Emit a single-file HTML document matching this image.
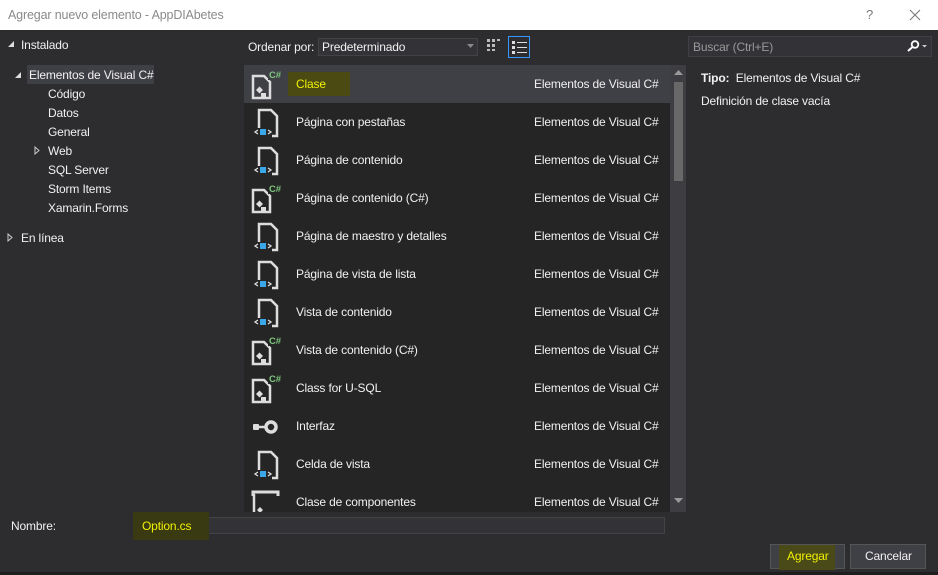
<!DOCTYPE html>
<html><head><meta charset="utf-8"><style>
*{margin:0;padding:0;box-sizing:border-box}
body{width:938px;height:575px;background:#2d2d30;font-family:"Liberation Sans",sans-serif;font-size:12px;letter-spacing:-0.15px;color:#f1f1f1;position:relative;overflow:hidden}
.a{position:absolute;white-space:nowrap}
.title{left:0;top:0;width:938px;height:30px;background:#fff}
.row{position:absolute;left:244px;width:426px;height:38px}
.row .n{position:absolute;left:52px;top:12px}
.row .c{position:absolute;left:290px;top:12px}
.row svg{position:absolute;left:6px;top:3px}
</style></head><body>
<div class="a title"></div>
<div class="a" style="left:8px;top:8px;color:#8a8a8a;font-size:12.5px">Agregar nuevo elemento - AppDIAbetes</div>
<div class="a" style="left:866px;top:7px;color:#777;font-size:13px">?</div>
<svg class="a" style="left:909px;top:9px" width="12" height="12"><path d="M1 1L11 11M11 1L1 11" stroke="#777" stroke-width="1"/></svg>

<svg class="a" style="left:7px;top:40px" width="8" height="8"><path d="M7 1V7H1Z" fill="#ddd"/></svg>
<div class="a" style="left:21px;top:38px">Instalado</div>
<div class="a" style="left:27px;top:65px;width:127px;height:19px;background:#3f3f46"></div>
<svg class="a" style="left:14px;top:71px" width="8" height="8"><path d="M7 1V7H1Z" fill="#ddd"/></svg>
<div class="a" style="left:29px;top:68px">Elementos de Visual C#</div>
<div class="a" style="left:48px;top:87px">Código</div>
<div class="a" style="left:48px;top:106px">Datos</div>
<div class="a" style="left:48px;top:125px">General</div>
<svg class="a" style="left:34px;top:146px" width="6" height="9"><path d="M1 1L5 4.5L1 8Z" fill="none" stroke="#ccc"/></svg>
<div class="a" style="left:48px;top:144px">Web</div>
<div class="a" style="left:48px;top:163px">SQL Server</div>
<div class="a" style="left:48px;top:182px">Storm Items</div>
<div class="a" style="left:48px;top:201px">Xamarin.Forms</div>
<svg class="a" style="left:7px;top:233px" width="6" height="9"><path d="M1 1L5 4.5L1 8Z" fill="none" stroke="#ccc"/></svg>
<div class="a" style="left:21px;top:231px">En línea</div>

<div class="a" style="left:248px;top:40px">Ordenar por:</div>
<div class="a" style="left:318px;top:38px;width:160px;height:18px;background:#333337;border:1px solid #434346"></div>
<div class="a" style="left:322px;top:40px">Predeterminado</div>
<svg class="a" style="left:467px;top:44px" width="7" height="4"><path d="M0 0H7L3.5 4Z" fill="#888"/></svg>
<svg class="a" style="left:487px;top:37px" width="14" height="18"><g fill="#bbb"><rect x="0" y="2" width="3" height="3"/><rect x="5" y="2" width="3" height="3"/><rect x="10" y="2" width="3" height="2"/><rect x="0" y="7" width="3" height="3"/><rect x="5" y="7" width="3" height="3"/><rect x="0" y="12" width="3" height="2"/><rect x="5" y="12" width="3" height="2"/></g></svg>
<div class="a" style="left:508px;top:36px;width:22px;height:22px;border:1px solid #3399ff"></div>
<svg class="a" style="left:512px;top:40px" width="16" height="14"><g fill="#ddd"><rect x="0" y="1" width="3" height="3"/><rect x="0" y="6" width="3" height="3"/><rect x="0" y="11" width="3" height="3"/><rect x="5" y="2" width="10" height="1"/><rect x="5" y="7" width="10" height="1"/><rect x="5" y="12" width="10" height="1"/></g></svg>

<div class="a" style="left:688px;top:36px;width:244px;height:21px;background:#333337;border:1px solid #3f3f46"></div>
<div class="a" style="left:693px;top:40px;color:#999">Buscar (Ctrl+E)</div>
<svg class="a" style="left:906px;top:40px" width="22" height="12"><circle cx="9" cy="4.5" r="3.3" fill="none" stroke="#fff" stroke-width="1.8"/><path d="M6.5 7L2 11" stroke="#fff" stroke-width="2"/><path d="M16 5H21L18.5 7.5Z" fill="#ccc"/></svg>

<div class="a" style="left:244px;top:65px;width:442px;height:447px;background:#252526"></div>
<div class="a" style="left:670px;top:65px;width:16px;height:447px;background:#3e3e42"></div>
<div class="a" style="left:674px;top:82px;width:9px;height:99px;background:#686868"></div>
<svg class="a" style="left:674px;top:70px" width="9" height="5"><path d="M0 5H9L4.5 0Z" fill="#999"/></svg>
<svg class="a" style="left:674px;top:498px" width="9" height="5"><path d="M0 0H9L4.5 5Z" fill="#999"/></svg>

<div class="a" style="left:701px;top:71px"><b>Tipo:</b>&nbsp; Elementos de Visual C#</div>
<div class="a" style="left:701px;top:94px">Definición de clase vacía</div>

<div class="row" style="top:65px;background:#3f3f46"><svg width="34" height="32"><path d="M3 8H14L20 14V30H3Z" fill="none" stroke="#ddd" stroke-width="2.5"/><rect x="18" y="0" width="14" height="12" fill="#3f3f46"/><text x="19" y="10" font-size="9.5" font-weight="bold" fill="#7ec87e" font-family="Liberation Sans">C#</text><path d="M6 22l3.5-3.5 3.5 3.5-3.5 3.5z M11 25h5v4h-5z" fill="#ddd"/></svg><div style="position:absolute;left:44px;top:7px;width:62px;height:24px;background:#4a4a12"></div><span class="n" style="color:#f0f000">Clase</span><span class="c">Elementos de Visual C#</span></div>

<div class="row" style="top:103px"><svg width="34" height="32"><path d="M9 4H21L27 10V30H9Z" fill="none" stroke="#ddd" stroke-width="2.5"/><rect x="4" y="22" width="18" height="10" fill="#252526"/><rect x="10" y="23" width="6" height="6" fill="#3aa7e8"/><path d="M8 24l-3 2 3 2M18 24l3 2-3 2" stroke="#ddd" fill="none" stroke-width="1.3"/></svg><span class="n">Página con pestañas</span><span class="c">Elementos de Visual C#</span></div>
<div class="row" style="top:141px"><svg width="34" height="32"><path d="M9 4H21L27 10V30H9Z" fill="none" stroke="#ddd" stroke-width="2.5"/><rect x="4" y="22" width="18" height="10" fill="#252526"/><rect x="10" y="23" width="6" height="6" fill="#3aa7e8"/><path d="M8 24l-3 2 3 2M18 24l3 2-3 2" stroke="#ddd" fill="none" stroke-width="1.3"/></svg><span class="n">Página de contenido</span><span class="c">Elementos de Visual C#</span></div>
<div class="row" style="top:179px"><svg width="34" height="32"><path d="M3 8H14L20 14V30H3Z" fill="none" stroke="#ddd" stroke-width="2.5"/><rect x="18" y="0" width="14" height="12" fill="#252526"/><text x="19" y="10" font-size="9.5" font-weight="bold" fill="#7ec87e" font-family="Liberation Sans">C#</text><path d="M6 22l3.5-3.5 3.5 3.5-3.5 3.5z M11 25h5v4h-5z" fill="#ddd"/></svg><span class="n">Página de contenido (C#)</span><span class="c">Elementos de Visual C#</span></div>
<div class="row" style="top:217px"><svg width="34" height="32"><path d="M9 4H21L27 10V30H9Z" fill="none" stroke="#ddd" stroke-width="2.5"/><rect x="4" y="22" width="18" height="10" fill="#252526"/><rect x="10" y="23" width="6" height="6" fill="#3aa7e8"/><path d="M8 24l-3 2 3 2M18 24l3 2-3 2" stroke="#ddd" fill="none" stroke-width="1.3"/></svg><span class="n">Página de maestro y detalles</span><span class="c">Elementos de Visual C#</span></div>
<div class="row" style="top:255px"><svg width="34" height="32"><path d="M9 4H21L27 10V30H9Z" fill="none" stroke="#ddd" stroke-width="2.5"/><rect x="4" y="22" width="18" height="10" fill="#252526"/><rect x="10" y="23" width="6" height="6" fill="#3aa7e8"/><path d="M8 24l-3 2 3 2M18 24l3 2-3 2" stroke="#ddd" fill="none" stroke-width="1.3"/></svg><span class="n">Página de vista de lista</span><span class="c">Elementos de Visual C#</span></div>
<div class="row" style="top:293px"><svg width="34" height="32"><path d="M9 4H21L27 10V30H9Z" fill="none" stroke="#ddd" stroke-width="2.5"/><rect x="4" y="22" width="18" height="10" fill="#252526"/><rect x="10" y="23" width="6" height="6" fill="#3aa7e8"/><path d="M8 24l-3 2 3 2M18 24l3 2-3 2" stroke="#ddd" fill="none" stroke-width="1.3"/></svg><span class="n">Vista de contenido</span><span class="c">Elementos de Visual C#</span></div>
<div class="row" style="top:331px"><svg width="34" height="32"><path d="M3 8H14L20 14V30H3Z" fill="none" stroke="#ddd" stroke-width="2.5"/><rect x="18" y="0" width="14" height="12" fill="#252526"/><text x="19" y="10" font-size="9.5" font-weight="bold" fill="#7ec87e" font-family="Liberation Sans">C#</text><path d="M6 22l3.5-3.5 3.5 3.5-3.5 3.5z M11 25h5v4h-5z" fill="#ddd"/></svg><span class="n">Vista de contenido (C#)</span><span class="c">Elementos de Visual C#</span></div>
<div class="row" style="top:369px"><svg width="34" height="32"><path d="M3 8H14L20 14V30H3Z" fill="none" stroke="#ddd" stroke-width="2.5"/><rect x="18" y="0" width="14" height="12" fill="#252526"/><text x="19" y="10" font-size="9.5" font-weight="bold" fill="#7ec87e" font-family="Liberation Sans">C#</text><path d="M6 22l3.5-3.5 3.5 3.5-3.5 3.5z M11 25h5v4h-5z" fill="#ddd"/></svg><span class="n">Class for U-SQL</span><span class="c">Elementos de Visual C#</span></div>
<div class="row" style="top:407px"><svg width="34" height="32"><rect x="3" y="14" width="6" height="6" rx="1" fill="#ddd"/><path d="M8 17H15" stroke="#ddd" stroke-width="2.5"/><circle cx="21" cy="17" r="5" fill="none" stroke="#ddd" stroke-width="3.5"/></svg><span class="n">Interfaz</span><span class="c">Elementos de Visual C#</span></div>
<div class="row" style="top:445px"><svg width="34" height="32"><path d="M9 4H21L27 10V30H9Z" fill="none" stroke="#ddd" stroke-width="2.5"/><rect x="4" y="22" width="18" height="10" fill="#252526"/><rect x="10" y="23" width="6" height="6" fill="#3aa7e8"/><path d="M8 24l-3 2 3 2M18 24l3 2-3 2" stroke="#ddd" fill="none" stroke-width="1.3"/></svg><span class="n">Celda de vista</span><span class="c">Elementos de Visual C#</span></div>
<div class="row" style="top:483px;height:29px;overflow:hidden"><svg width="34" height="32"><path d="M3 10V6H28V10" fill="none" stroke="#ddd" stroke-width="3"/><path d="M4 8V32" stroke="#ddd" stroke-width="2.5"/><path d="M7 24l3-3 3 3-3 3z" fill="#ddd"/></svg><span class="n">Clase de componentes</span><span class="c">Elementos de Visual C#</span></div>

<div class="a" style="left:11px;top:519px">Nombre:</div>
<div class="a" style="left:137px;top:517px;width:528px;height:17px;background:#333337;border:1px solid #434346"></div>
<div class="a" style="left:133px;top:512px;width:76px;height:28px;background:#3a3a12"></div>
<div class="a" style="left:142px;top:519px;color:#f0f000">Option.cs</div>
<div class="a" style="left:770px;top:544px;width:75px;height:25px;background:#3f3f46;border:1px solid #555"></div>
<div class="a" style="left:779px;top:545px;width:56px;height:25px;background:#4a4a18"></div>
<div class="a" style="left:787px;top:549px;color:#f0f000">Agregar</div>
<div class="a" style="left:850px;top:544px;width:76px;height:25px;background:#3f3f46;border:1px solid #555"></div>
<div class="a" style="left:865px;top:549px">Cancelar</div>
<div class="a" style="left:0;top:572px;width:938px;height:3px;background:#1e1e1e"></div>
</body></html>
